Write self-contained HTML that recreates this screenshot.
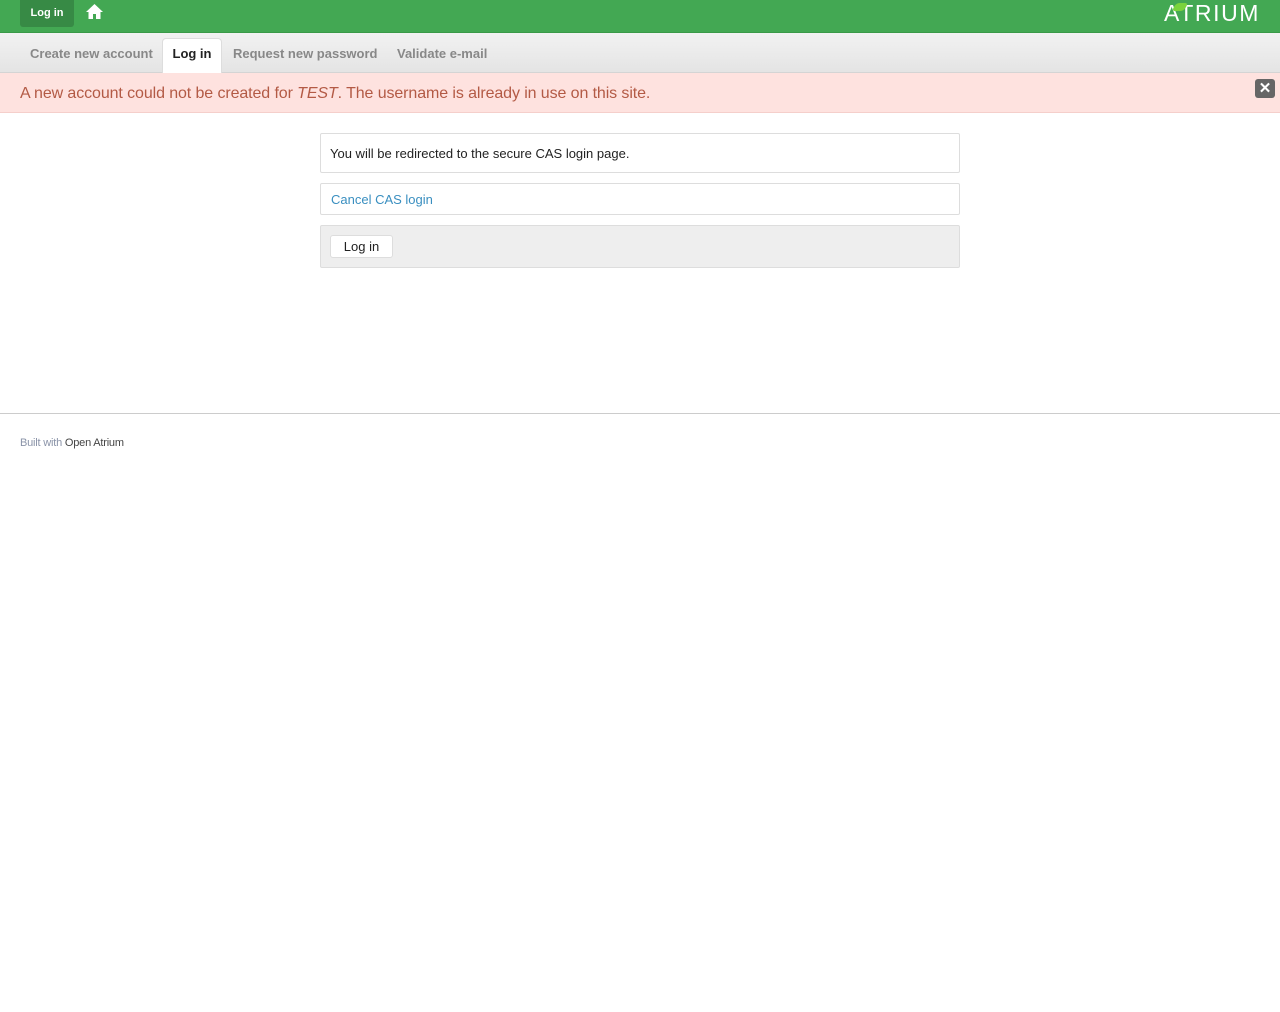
<!DOCTYPE html>
<html><head><style>
*{box-sizing:border-box;margin:0;padding:0}
body{width:1280px;height:1012px;background:#fff;font-family:"Liberation Sans",sans-serif;position:relative;overflow:hidden}
.top{position:absolute;top:0;left:0;width:1280px;height:33px;background:#43a853;border-bottom:1px solid #3a9a48}
.login{position:absolute;left:20px;top:0;width:54px;height:27px;background:#378a45;border-radius:0 0 3px 3px;color:#fff;font-size:11px;font-weight:bold;line-height:26px;text-align:center}
.tabs{position:absolute;top:33px;left:0;width:1280px;height:40px;background:linear-gradient(#f2f2f2,#e4e4e4);border-bottom:1px solid #d4d4d4}
.tab{position:absolute;top:20px;font-size:13px;font-weight:bold;color:#888}
.act{position:absolute;left:162px;top:5px;width:60px;height:35px;background:#fff;border:1px solid #ddd;border-bottom:none;border-radius:4px 4px 0 0;font-size:13px;font-weight:bold;color:#222;text-align:center;line-height:30px}
.msg{position:absolute;top:73px;left:0;width:1280px;height:40px;background:#fee2df;border-bottom:1px solid #f5cfcb;color:#b35a45;font-size:16px;line-height:42px;padding-left:20px;letter-spacing:-0.1px}
.x{position:absolute;right:5px;top:6px;width:20px;height:19px;background:#666;border-radius:3px;color:#fff;font-size:15px;font-weight:bold;text-align:center;line-height:19px;letter-spacing:0}
.box{position:absolute;left:320px;width:640px;border:1px solid #ddd;border-radius:2px}
</style></head><body>
<div class="top"><div class="login">Log in</div>
<svg style="position:absolute;left:86px;top:4px" width="17" height="15" viewBox="0 0 17 15"><path d="M8.5 0L0 8h2.5v7h4.5v-5h3v5h4.5V8H17z" fill="#fff"/></svg>
<div style="position:absolute;left:1164px;top:0px;color:#fff;font-size:23px;letter-spacing:1.6px">ATRIUM</div>
<div style="position:absolute;left:1174px;top:3px;width:12px;height:8px;background:#7ad33c;transform:skewX(-30deg);border-radius:3px"></div>
</div>
<div class="tabs">
<span class="tab" style="left:30px;top:13px">Create new account</span>
<div class="act">Log in</div>
<span class="tab" style="left:233px;top:13px">Request new password</span>
<span class="tab" style="left:397px;top:13px">Validate e-mail</span>
</div>
<div class="msg">A new account could not be created for <i>TEST</i>. The username is already in use on this site.<div class="x">✕</div></div>
<div class="box" style="top:133px;height:40px;font-size:13px;color:#222;padding:12px 9px">You will be redirected to the secure CAS login page.</div>
<div class="box" style="top:183px;height:32px;font-size:13px;color:#3a8fc0;padding:8px 10px">Cancel CAS login</div>
<div class="box" style="top:225px;height:43px;background:#eee"><div style="position:absolute;left:9px;top:9px;width:63px;height:23px;background:#fff;border:1px solid #ddd;border-radius:3px;font-size:13px;color:#222;text-align:center;line-height:21px">Log in</div></div>
<div style="position:absolute;top:413px;left:0;width:1280px;border-top:1px solid #ccc"></div>
<div style="position:absolute;top:437px;left:20px;font-size:11px;color:#8a93a8;letter-spacing:-0.2px">Built with <span style="color:#444">Open Atrium</span></div>
</body></html>
